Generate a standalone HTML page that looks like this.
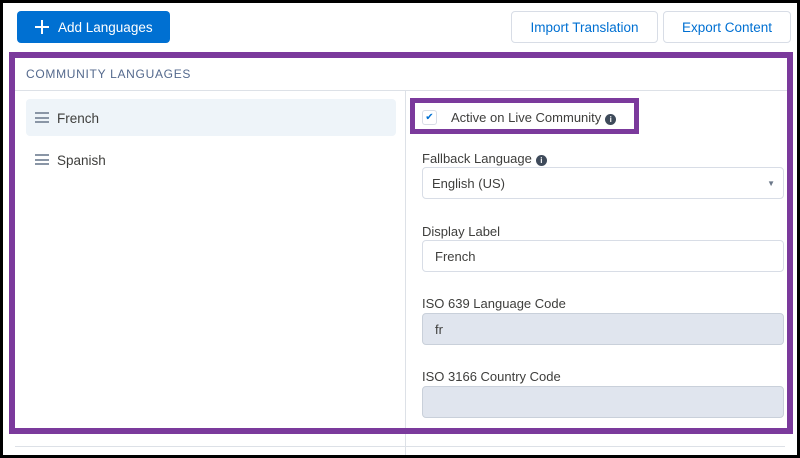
<!DOCTYPE html>
<html><head><style>
*{box-sizing:border-box;margin:0;padding:0}
body{width:800px;height:458px;background:#000;font-family:"Liberation Sans",sans-serif;position:relative;overflow:hidden}
.pg{position:absolute;left:3px;top:3px;width:794px;height:452px;background:#fff}
.a{position:absolute}
.btn{position:absolute;top:11px;height:32px;border:1px solid #d8dde6;border-radius:4px;background:#fff;color:#0070d2;font-size:13.5px;line-height:31px;text-align:center}
.lbl{position:absolute;left:422px;font-size:13px;color:#3e3e3c}
.inp{position:absolute;left:422px;width:362px;height:32px;border:1px solid #d8dde6;border-radius:4px;background:#fff;font-size:13px;color:#3e3e3c;line-height:31px;padding-left:12px}
.gr{background:#e0e5ee;border-color:#c9d0da}
.ham{position:absolute;left:35px;width:14px;height:11px;border-top:2px solid #8a96a6;border-bottom:2px solid #8a96a6}
.ham:after{content:"";position:absolute;left:0;right:0;top:2.5px;border-top:2px solid #8a96a6}
.info{display:inline-block;width:11px;height:11px;border-radius:50%;background:#3e4a5a;color:#fff;font-size:8px;line-height:11px;text-align:center;font-weight:bold;vertical-align:0;margin-left:4px}
</style></head><body>
<div class="pg"></div>
<div class="a" style="left:17px;top:11px;width:153px;height:32px;background:#0070d2;border-radius:4px;color:#fff;font-size:13.5px;line-height:33px;padding-left:41px">Add Languages</div>
<div class="a" style="left:35px;top:26px;width:14px;height:2px;background:#fff"></div>
<div class="a" style="left:41px;top:20px;width:2px;height:14px;background:#fff"></div>
<div class="btn" style="left:511px;width:147px">Import Translation</div>
<div class="btn" style="left:663px;width:128px">Export Content</div>
<div class="a" style="left:15px;top:446px;width:770px;height:1px;background:#dde1e7"></div>
<div class="a" style="left:405px;top:90px;width:1px;height:365px;background:#dde1e7"></div>
<div class="a" style="left:15px;top:90px;width:772px;height:1px;background:#dde1e7"></div>
<div class="a" style="left:26px;top:67px;font-size:12px;letter-spacing:.7px;color:#54698d">COMMUNITY LANGUAGES</div>
<div class="a" style="left:26px;top:99px;width:370px;height:37px;background:#eef4f9;border-radius:4px"></div>
<div class="ham" style="top:112px"></div>
<div class="a" style="left:57px;top:111px;font-size:13.5px;color:#3e3e3c">French</div>
<div class="ham" style="top:154px"></div>
<div class="a" style="left:57px;top:153px;font-size:13.5px;color:#3e3e3c">Spanish</div>
<div class="a" style="left:410px;top:98px;width:229px;height:36px;border:5px solid #7b3a9c"></div>
<div class="a" style="left:422px;top:110px;width:15px;height:15px;border:1px solid #d8dde6;border-radius:3px;background:#fff;color:#0070d2;font-size:10px;line-height:13px;text-align:center">✔</div>
<div class="a" style="left:451px;top:110px;font-size:13px;color:#3e3e3c">Active on Live Community<span class="info">i</span></div>
<div class="lbl" style="top:151px">Fallback Language<span class="info">i</span></div>
<div class="inp" style="top:167px;padding-left:9px">English (US)<span style="position:absolute;right:8px;top:0;font-size:8px;color:#6b7789">▼</span></div>
<div class="lbl" style="top:224px">Display Label</div>
<div class="inp" style="top:240px">French</div>
<div class="lbl" style="top:296px">ISO 639 Language Code</div>
<div class="inp gr" style="top:313px">fr</div>
<div class="lbl" style="top:369px">ISO 3166 Country Code</div>
<div class="inp gr" style="top:386px"></div>
<div class="a" style="left:9px;top:52px;width:784px;height:382px;border:6px solid #7b3a9c"></div>
</body></html>
